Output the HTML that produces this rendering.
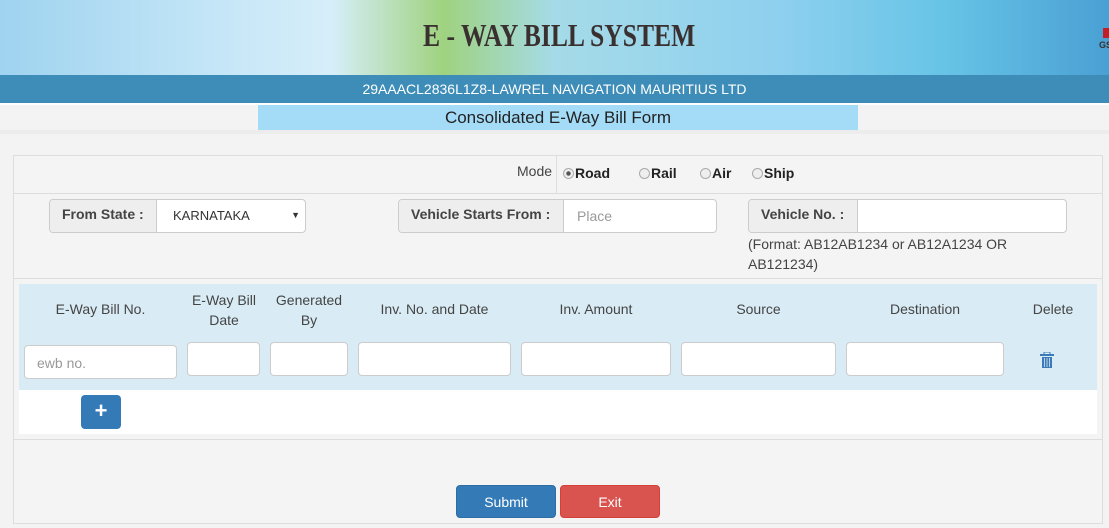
<!DOCTYPE html>
<html><head><meta charset="utf-8"><style>
*{box-sizing:border-box;margin:0;padding:0}
body{width:1109px;height:528px;overflow:hidden;background:#f3f3f3;font-family:"Liberation Sans",Arial,sans-serif;font-size:14px;color:#333;position:relative}
.abs{position:absolute}
.hdr{left:0;top:0;width:1109px;height:75px;background:linear-gradient(90deg,#9fd3ef 0%,#c9e8f8 22%,#d6eef9 30%,#9fd27f 40%,#a5dbe8 50%,#8fd0ef 70%,#67c4e6 85%,#4aa0d4 100%)}
.title{left:359px;width:400px;top:17px;text-align:center;font-family:"Liberation Serif",serif;font-size:32px;font-weight:bold;color:#3a3030;white-space:nowrap}
.title span{display:inline-block;transform:scaleX(0.8);transform-origin:center}
.bar{left:0;top:75px;width:1109px;height:28px;background:#3d8db8;color:#fff;text-align:center;font-size:14px;line-height:28px}
.sub{left:258px;top:105px;width:600px;height:25px;background:#a4dcf7;text-align:center;font-size:17px;line-height:25px;color:#222}
.panel{left:13px;top:155px;width:1090px;height:369px;border:1px solid #ddd;background:#f4f4f4}
.hl{height:1px;background:#ddd}
.grp{border:1px solid #ccc;border-radius:4px;display:flex;height:34px;overflow:hidden;background:#fff}
.grp .lab{background:#eee;border-right:1px solid #ccc;font-weight:bold;padding:0 12px;line-height:28px;color:#444}
.inp{background:#fff;border:1px solid #ccc;border-radius:4px;height:34px}
.th{top:290px;text-align:center;font-size:14px;color:#444;line-height:20px}
.rad{display:inline-block;width:11px;height:11px;border-radius:50%;border:1px solid #aaa;background:#eee;vertical-align:-1px;margin-right:1px}
.btn{border-radius:4px;color:#fff;text-align:center;line-height:32px;height:33px}
</style></head><body>
<div class="abs hdr"></div>
<div class="abs title"><span>E - WAY BILL SYSTEM</span></div>
<div class="abs" style="left:1103px;top:28px;width:6px;height:10px;background:#c0202a"></div>
<div class="abs" style="left:1099px;top:40px;font-size:9px;font-weight:bold;color:#333">GS</div>
<div class="abs bar">29AAACL2836L1Z8-LAWREL NAVIGATION MAURITIUS LTD</div>
<div class="abs" style="left:0;top:103px;width:1109px;height:2px;background:#fff"></div>
<div class="abs sub">Consolidated E-Way Bill Form</div>
<div class="abs" style="left:0;top:130px;width:1109px;height:4px;background:#ececec"></div>

<div class="abs panel"></div>
<div class="abs hl" style="left:14px;top:193px;width:1088px"></div>
<div class="abs hl" style="left:14px;top:278px;width:1088px"></div>
<div class="abs" style="left:556px;top:156px;width:1px;height:37px;background:#ddd"></div>
<div class="abs" style="left:517px;top:163px;color:#444">Mode</div>
<div class="abs" style="left:563px;top:165px;font-weight:bold;color:#222"><span class="rad" style="background:radial-gradient(#555 30%,#eee 40%)"></span>Road</div>
<div class="abs" style="left:639px;top:165px;font-weight:bold;color:#222"><span class="rad"></span>Rail</div>
<div class="abs" style="left:700px;top:165px;font-weight:bold;color:#222"><span class="rad"></span>Air</div>
<div class="abs" style="left:752px;top:165px;font-weight:bold;color:#222"><span class="rad"></span>Ship</div>

<div class="abs grp" style="left:49px;top:199px;width:257px"><div class="lab" style="width:107px">From State :</div><div style="flex:1;font-size:13px;padding:8px 16px;position:relative">KARNATAKA<span style="position:absolute;right:5px;top:10px;font-size:9px">▼</span></div></div>
<div class="abs grp" style="left:398px;top:199px;width:319px"><div class="lab" style="width:165px">Vehicle Starts From :</div><div style="flex:1;padding:8px 13px;color:#999">Place</div></div>
<div class="abs grp" style="left:748px;top:199px;width:319px"><div class="lab" style="width:109px">Vehicle No. :</div><div style="flex:1"></div></div>
<div class="abs" style="left:748px;top:234px;line-height:20px;color:#444">(Format: AB12AB1234 or AB12A1234 OR<br>AB121234)</div>

<div class="abs" style="left:19px;top:284px;width:1078px;height:106px;background:#d9ecf5"></div>
<div class="abs" style="left:19px;top:390px;width:1078px;height:44px;background:#fff"></div>
<div class="abs hl" style="left:14px;top:439px;width:1088px"></div>

<div class="abs th" style="left:24px;width:153px;top:299px">E-Way Bill No.</div>
<div class="abs th" style="left:183px;width:82px">E-Way Bill<br>Date</div>
<div class="abs th" style="left:267px;width:84px">Generated<br>By</div>
<div class="abs th" style="left:358px;width:153px;top:299px">Inv. No. and Date</div>
<div class="abs th" style="left:521px;width:150px;top:299px">Inv. Amount</div>
<div class="abs th" style="left:681px;width:155px;top:299px">Source</div>
<div class="abs th" style="left:846px;width:158px;top:299px">Destination</div>
<div class="abs th" style="left:1023px;width:60px;top:299px">Delete</div>

<div class="abs inp" style="left:24px;top:345px;width:153px;padding:9px 12px;color:#999">ewb no.</div>
<div class="abs inp" style="left:187px;top:342px;width:73px"></div>
<div class="abs inp" style="left:270px;top:342px;width:78px"></div>
<div class="abs inp" style="left:358px;top:342px;width:153px"></div>
<div class="abs inp" style="left:521px;top:342px;width:150px"></div>
<div class="abs inp" style="left:681px;top:342px;width:155px"></div>
<div class="abs inp" style="left:846px;top:342px;width:158px"></div>
<svg class="abs" style="left:1039px;top:352px" width="16" height="17" viewBox="0 0 16 17"><rect x="1" y="2" width="14" height="2" fill="#3a7ab8"/><rect x="5" y="0" width="6" height="3" fill="none" stroke="#3a7ab8" stroke-width="1"/><path d="M3 5h10v11H3z" fill="#3a7ab8"/><path d="M5.5 6v9M8 6v9M10.5 6v9" stroke="#b9d0ea" stroke-width="1"/></svg>

<div class="abs btn" style="left:81px;top:395px;width:40px;height:34px;background:#337ab7;font-size:22px;font-weight:bold;line-height:32px">+</div>
<div class="abs btn" style="left:456px;top:485px;width:100px;background:#337ab7;border:1px solid #2e6da4">Submit</div>
<div class="abs btn" style="left:560px;top:485px;width:100px;background:#d9534f;border:1px solid #d43f3a">Exit</div>
</body></html>
